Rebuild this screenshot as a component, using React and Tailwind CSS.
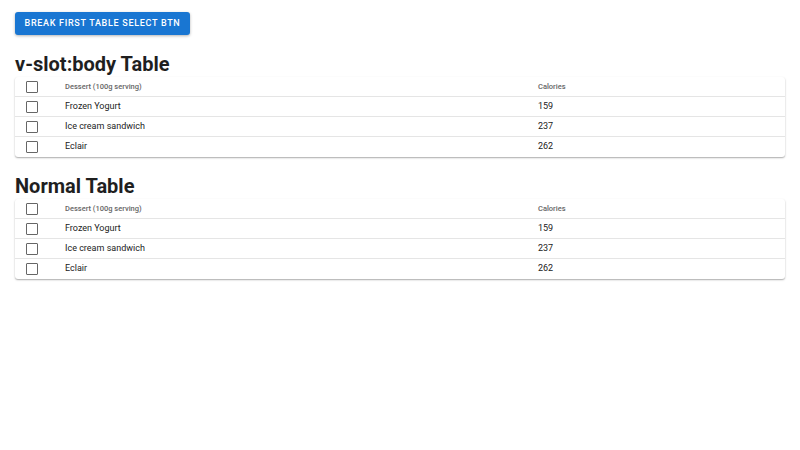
import React from 'react';

const rows = [
  { name: 'Frozen Yogurt', calories: 159 },
  { name: 'Ice cream sandwich', calories: 237 },
  { name: 'Eclair', calories: 262 },
];

function Box() {
  return <span className="block w-[12px] h-[12px] border-[1.5px] border-[#666] rounded-[1px]" />;
}

function DataTable() {
  return (
    <div className="rounded-[3px] bg-white shadow-[0_1px_2px_rgba(0,0,0,0.25),0_1px_1px_rgba(0,0,0,0.1)]">
      <div className="flex items-center h-[20px] border-b border-[#e5e5e5]">
        <div className="w-[50px] flex justify-center pr-[16px]"><Box /></div>
        <div className="w-[473px] text-[7.5px] font-medium text-[#666]">Dessert (100g serving)</div>
        <div className="flex-1 text-[7.5px] font-medium text-[#666]">Calories</div>
      </div>
      {rows.map((r, i) => (
        <div key={r.name} className={`flex items-center h-[20px] ${i < rows.length - 1 ? 'border-b border-[#e5e5e5]' : ''}`}>
          <div className="w-[50px] flex justify-center pr-[16px]"><Box /></div>
          <div className="w-[473px] text-[9px] text-[#222]">{r.name}</div>
          <div className="flex-1 text-[9px] text-[#222]">{r.calories}</div>
        </div>
      ))}
    </div>
  );
}

export default function App() {
  return (
    <div className="w-[800px] h-[450px] bg-white px-[15px] pt-[12px] font-['Roboto',sans-serif]">
      <button className="block h-[23px] w-[175px] rounded-[3px] bg-[#1976d2] text-white text-[9px] font-medium uppercase tracking-[0.7px] shadow-[0_1px_3px_rgba(0,0,0,0.3)]">
        Break first table select btn
      </button>
      <h2 className="mt-[16px] text-[20px] font-bold leading-[26px] text-[#1f1f1f]">v-slot:body Table</h2>
      <DataTable />
      <h2 className="mt-[16px] text-[20px] font-bold leading-[26px] text-[#1f1f1f]">Normal Table</h2>
      <DataTable />
    </div>
  );
}
